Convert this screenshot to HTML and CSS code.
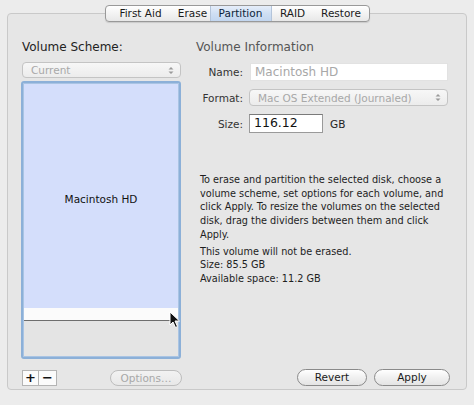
FILE: index.html
```html
<!DOCTYPE html>
<html>
<head>
<meta charset="utf-8">
<link rel="stylesheet" href="styles.css">
</head>
<body>
<div class="window">
  <div class="panel">
    <div class="tabs">
      <div class="tab">First Aid</div>
      <div class="tab">Erase</div>
      <div class="tab sel">Partition</div>
      <div class="tab">RAID</div>
      <div class="tab last">Restore</div>
    </div>
    <div class="content">
      <div class="left">
        <div class="heading">Volume Scheme:</div>
        <div class="popup dis scheme">
          <span>Current</span>
          <svg class="arrows" width="6" height="9" viewBox="0 0 6 9"><path d="M0.5 3.5 L3 1 L5.5 3.5 Z M0.5 5.5 L3 8 L5.5 5.5 Z" fill="#9a9a9a"/></svg>
        </div>
        <div class="list">
          <div class="vol"><span>Macintosh HD</span></div>
          <div class="free"></div>
          <div class="empty"></div>
        </div>
      </div>
      <div class="right">
        <div class="heading light">Volume Information</div>
        <div class="form">
          <div class="lbl">Name:</div>
          <div class="field dis">Macintosh HD</div>
          <div class="lbl">Format:</div>
          <div class="popup dis fmt">
            <span>Mac OS Extended (Journaled)</span>
            <svg class="arrows" width="6" height="9" viewBox="0 0 6 9"><path d="M0.5 3.5 L3 1 L5.5 3.5 Z M0.5 5.5 L3 8 L5.5 5.5 Z" fill="#9a9a9a"/></svg>
          </div>
          <div class="lbl">Size:</div>
          <div class="sizerow"><div class="field size">116.12</div><span class="unit">GB</span></div>
        </div>
        <p class="desc">To erase and partition the selected disk, choose a volume scheme, set options for each volume, and click Apply. To resize the volumes on the selected disk, drag the dividers between them and click Apply.</p>
        <p class="info">This volume will not be erased.<br>Size: 85.5 GB<br>Available space: 11.2 GB</p>
      </div>
    </div>
    <div class="bottom">
      <div class="pm"><div class="pmb">+</div><div class="pmb">−</div></div>
      <div class="btn dis options">Options…</div>
      <div class="spacer"></div>
      <div class="btn revert">Revert</div>
      <div class="btn apply">Apply</div>
    </div>
  </div>
  <svg class="cursor" width="12" height="18" viewBox="0 0 12 18"><path d="M1 1 L1 14 L4 11 L6.5 16.5 L8.5 15.5 L6 10 L10.5 10 Z" fill="#111" stroke="#fff" stroke-width="1"/></svg>
</div>
</body>
</html>
```
FILE: styles.css
```css
* { box-sizing: border-box; }
html, body { margin: 0; padding: 0; }
body {
  width: 474px;
  height: 405px;
  background: #ececec;
  font-family: "DejaVu Sans", sans-serif;
  font-size: 10.5px;
  color: #1a1a1a;
  overflow: hidden;
}
.window {
  position: relative;
  padding: 13px 7px 0 7px;
}
.panel {
  height: 377px;
  border: 1px solid #c9c9c9;
  border-radius: 4px;
  background: #e6e6e6;
  display: flex;
  flex-direction: column;
}
.tabs {
  display: flex;
  align-self: center;
  margin-top: -9px;
  height: 17px;
  border: 1px solid #999;
  border-radius: 4px;
  background: linear-gradient(#ffffff, #f3f3f3 50%, #e8e8e8);
  box-shadow: 0 1px 1px rgba(0,0,0,0.12);
  overflow: hidden;
}
.tab {
  line-height: 15px;
  font-size: 10.5px;
  color: #1a1a1a;
  text-align: center;
}
.tab:nth-child(1) { width: 70px; }
.tab:nth-child(2) { width: 34px; }
.tab:nth-child(3) { width: 62px; }
.tab:nth-child(4) { width: 42px; }
.tab:nth-child(5) { width: 55px; }
.tab.sel {
  background: linear-gradient(#e6eefa, #cfdff3 50%, #c2d6ef);
  color: #0d1f3a;
  border-left: 1px solid #b3c4da;
  border-right: 1px solid #b3c4da;
}
.content {
  display: flex;
  gap: 14px;
  padding: 0 0 0 13px;
  margin-top: 18px;
}
.left { width: 160px; display: flex; flex-direction: column; }
.right { flex: 1; display: flex; flex-direction: column; }
.heading {
  font-size: 12px;
  line-height: 14px;
  color: #222;
  padding-left: 1px;
}
.heading.light { color: #555; }
.popup {
  display: flex;
  align-items: center;
  justify-content: space-between;
  border: 1px solid #c4c4c4;
  border-radius: 4px;
  background: linear-gradient(#f7f7f7, #ececec);
  color: #a8a8a8;
  padding: 0 6px 0 8px;
}
.scheme { margin-top: 8px; height: 16px; margin-left: 1px; }
.list {
  margin-top: 3px;
  height: 278px;
  border: 2px solid #8cb0d8;
  border-radius: 3px;
  display: flex;
  flex-direction: column;
  box-shadow: inset 0 0 0 1px #a9c4e3;
  padding: 1px;
}
.vol {
  flex: 0 0 224px;
  background: #d4defb;
  display: flex;
  align-items: center;
  justify-content: center;
  color: #111;
  font-size: 10.5px;
  padding-top: 6px;
}
.free {
  flex: 0 0 13px;
  background: #fbfbfb;
  border-bottom: 1px solid #6e6e6e;
}
.empty { flex: 1; background: #e4e4e4; }
.form {
  display: grid;
  grid-template-columns: 48px 1fr;
  column-gap: 6px;
  row-gap: 8px;
  margin-top: 9px;
  width: 253px;
  align-items: center;
}
.lbl { text-align: right; color: #333; }
.field {
  height: 18px;
  background: #fff;
  border: 1px solid #e2e2e2;
  line-height: 16px;
  padding-left: 4px;
  font-size: 12px;
}
.field.dis { color: #a8a8a8; margin-left: 1px; }
.fmt { height: 17px; }
.sizerow { display: flex; align-items: center; }
.field.size {
  width: 74px;
  height: 19px;
  border: 1px solid #9a9a9a;
  border-top-color: #7a7a7a;
  color: #111;
  font-size: 12.5px;
}
.unit { margin-left: 7px; color: #222; }
.desc, .info {
  font-family: "DejaVu Sans Condensed", "DejaVu Sans", sans-serif;
  font-size: 10.8px;
  color: #1e1e1e;
}
.desc {
  margin: 40px 0 0 5px;
  line-height: 13.7px;
  width: 250px;
}
.info {
  margin: 3px 0 0 5px;
  line-height: 13.5px;
}
.bottom {
  display: flex;
  align-items: center;
  margin-top: 10px;
  padding: 0 16px 0 14px;
}
.pm { display: flex; height: 16px; }
.pmb {
  width: 17px;
  height: 16px;
  border: 1px solid #b4b4b4;
  background: #fbfbfb;
  font-weight: bold;
  font-size: 13px;
  line-height: 13px;
  text-align: center;
  color: #111;
}
.pmb + .pmb { border-left: none; width: 18px; }
.btn {
  height: 17px;
  border: 1px solid #8a8a8a;
  border-radius: 9px;
  background: linear-gradient(#ffffff, #f0f0f0 50%, #e4e4e4);
  text-align: center;
  line-height: 15px;
  color: #1a1a1a;
}
.btn.dis {
  color: #a8a8a8;
  border-color: #bdbdbd;
  background: linear-gradient(#f2f2f2, #e8e8e8);
}
.options { width: 72px; height: 16px; margin-left: 53px; }
.spacer { flex: 1; }
.revert { width: 70px; }
.apply { width: 76px; margin-left: 7px; }
.cursor {
  position: absolute;
  left: 169px;
  top: 311px;
}
```
